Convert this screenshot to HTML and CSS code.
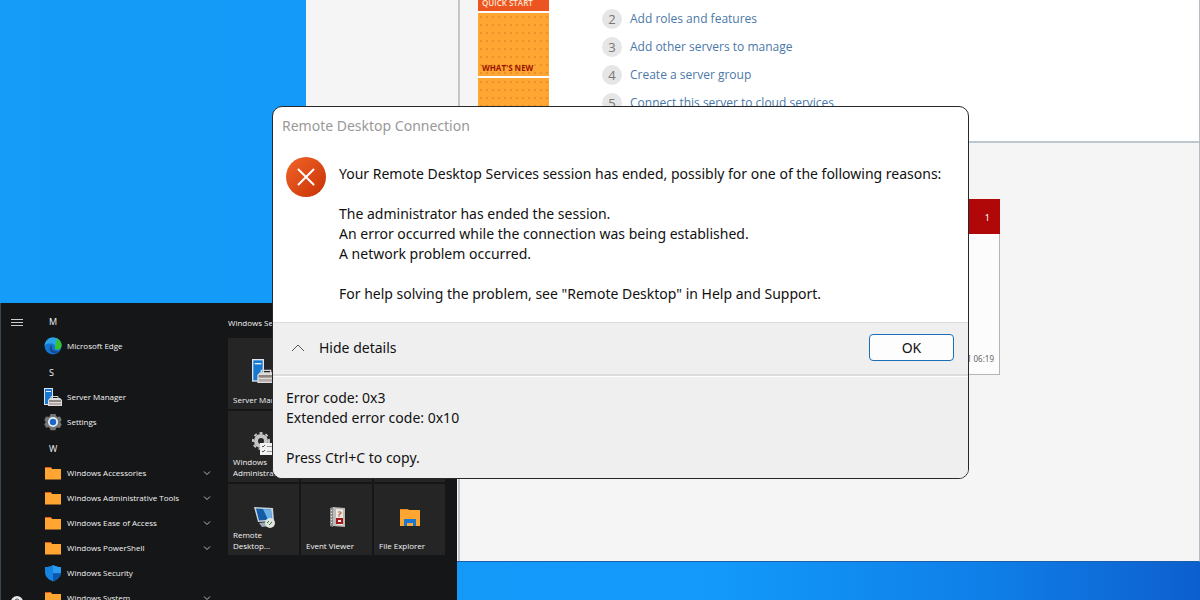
FILE: index.html
```html
<!doctype html>
<html lang="en">

<head>
  <meta charset="UTF-8" />
  <meta name="viewport" content="width=device-width, initial-scale=1.0" />
  <title>Remote Desktop Connection</title>
  <link rel="stylesheet" href="styles.css">
</head>

<body>
  <!-- shared icons -->
  <svg class="sprite" aria-hidden="true">
    <symbol id="folder" viewBox="0 0 16 14">
      <path d="M0 1h6l1 2v3H0z" fill="#e2571c" />
      <path d="M0 2h6l1 1h9v10.500H0z" fill="#ffa632" />
    </symbol>
    <symbol id="chevron" viewBox="0 0 8 8">
      <path d="M1 2.500l3 3 3-3" fill="none" stroke="#bbb" />
    </symbol>
    <symbol id="server" viewBox="0 0 18 18">
      <path d="M0 0h9v17H0z" fill="#d9e6f2" />
      <path d="M1 1h7v15H1z" fill="#1878d0" />
      <path d="M2 3.500h5" stroke="#e8f2fb" />
      <path d="M7 11V8.500h7V11" fill="none" stroke="#d5d5d5" />
      <path d="M4 12l2-2h10l2 2v6H4z" fill="#dcdcdc" />
      <path d="M5 12h12v2H5z" fill="#8f8580" />
      <path d="M5 15h12v2H5z" fill="#b5aaa5" />
    </symbol>
  </svg>

  <main class="desktop">
    <section class="server-window" aria-label="Server Manager">
      <aside class="sidebar"></aside>
      <div class="dashboard">
        <div class="welcome">
          <nav class="welcome-tabs">
            <a href="#" class="tab tab-start">QUICK START</a>
            <a href="#" class="tab">WHAT'S NEW</a>
            <a href="#" class="tab" aria-label="Learn more"></a>
          </nav>
          <ol class="steps">
            <li><span class="num">2</span><a href="#">Add roles and features</a></li>
            <li><span class="num">3</span><a href="#">Add other servers to manage</a></li>
            <li><span class="num">4</span><a href="#">Create a server group</a></li>
            <li><span class="num">5</span><a href="#">Connect this server to cloud services</a></li>
          </ol>
        </div>
        <article class="role-card">
          <header>1</header>
          <p>1 06:19</p>
        </article>
      </div>
    </section>

    <section class="start-menu" aria-label="Start">
      <div class="rail">
        <button class="menu-btn" aria-label="Expand">
          <svg width="12" height="8" viewBox="0 0 12 8"><path d="M0 .5h12M0 3.500h12M0 6.500h12" stroke="#ccc" /></svg>
        </button>
        <svg class="avatar" width="12" height="12" viewBox="0 0 12 12">
          <circle cx="6" cy="6" r="6" fill="#e8e8e8" />
          <circle cx="6" cy="5" r="2" fill="none" stroke="#555" />
        </svg>
      </div>

      <ul class="apps">
        <li class="letter">M</li>
        <li>
          <a href="#">
            <svg width="18" height="18" viewBox="0 0 18 18">
              <circle cx="9" cy="9" r="8.500" fill="#1673cf" />
              <path d="M.5 8.500C1.500 3 5 .5 9 .5c5 0 8.500 3.500 8.500 7.500 0 3-2 4.500-4.500 4.500-2 0-2.500-1-2-2 .5-2-1-4-4-4C4 6.500 1.500 7 .5 8.500z" fill="#2ba4ea" />
              <path d="M13 1.500c3 1.500 4.500 4 4.500 6.500 0 3-2 4.500-4.500 4.500-2 0-2.500-1-2-2 .5-2 1-5 2-9z" fill="#37c22b" />
              <path d="M8 8c-1 4 2 7 7 6-2 3-6 3-8 1-2-2-2-6 1-7z" fill="#124d93" />
            </svg>
            Microsoft Edge
          </a>
        </li>
        <li class="letter">S</li>
        <li><a href="#"><svg width="18" height="18"><use href="#server" /></svg>Server Manager</a></li>
        <li>
          <a href="#">
            <svg width="18" height="18" viewBox="0 0 18 18">
              <path d="M6.500 1h5l.8 2.300 1.200.7 2.500-.5 1.700 3.500-1.500 2 1.500 2.500-2 3.500-2.500-.5-1.200.7-.5 2h-5l-.8-2.200-1.200-.7-2.500.5-1.700-3.500L1.800 9 .3 7l1.700-3.500 2.500.5 1.200-.7z" fill="#767676" />
              <circle cx="9" cy="9" r="5" fill="#e6edf5" />
              <circle cx="9" cy="9" r="3.200" fill="#1b66c9" />
            </svg>
            Settings
          </a>
        </li>
        <li class="letter">W</li>
        <li><a href="#"><svg width="18" height="14"><use href="#folder" /></svg>Windows Accessories<svg class="chev" width="8" height="8"><use href="#chevron" /></svg></a></li>
        <li><a href="#"><svg width="18" height="14"><use href="#folder" /></svg>Windows Administrative Tools<svg class="chev" width="8" height="8"><use href="#chevron" /></svg></a></li>
        <li><a href="#"><svg width="18" height="14"><use href="#folder" /></svg>Windows Ease of Access<svg class="chev" width="8" height="8"><use href="#chevron" /></svg></a></li>
        <li><a href="#"><svg width="18" height="14"><use href="#folder" /></svg>Windows PowerShell<svg class="chev" width="8" height="8"><use href="#chevron" /></svg></a></li>
        <li>
          <a href="#">
            <svg width="18" height="18" viewBox="0 0 18 18">
              <path d="M9 1c2.500 1.500 5 2 8 2v5c0 5-4 8-8 9.500C5 16 1 13 1 8V3c3 0 5.500-.5 8-2z" fill="#1683e0" />
              <path d="M9 1c2.500 1.500 5 2 8 2v5c0 .5 0 .8-.1 1.200H9z" fill="#2a9bf0" />
              <path d="M9 9.200h7.900C16.300 13.500 12.500 16.200 9 17.500z" fill="#0c57ae" />
            </svg>
            Windows Security
          </a>
        </li>
        <li><a href="#"><svg width="18" height="14"><use href="#folder" /></svg>Windows System<svg class="chev" width="8" height="8"><use href="#chevron" /></svg></a></li>
      </ul>

      <div class="tiles-group">
        <h2>Windows Server</h2>
        <div class="tiles">
          <a href="#" class="tile">
            <svg width="24" height="24"><use href="#server" /></svg>
            <span>Server Manager</span>
          </a>
          <a href="#" class="tile"></a>
          <a href="#" class="tile"></a>
          <a href="#" class="tile">
            <svg width="24" height="24" viewBox="0 0 24 24">
              <circle cx="9" cy="9" r="5" fill="none" stroke="#c4c4c4" stroke-width="4" />
              <circle cx="9" cy="9" r="8" fill="none" stroke="#c4c4c4" stroke-width="2" stroke-dasharray="3 3" />
              <path d="M8 11h16v12H8z" fill="#f1f1f1" />
              <path d="M10 14l1 1 2-2M10 19l1 1 2-2" fill="none" stroke="#555" />
              <path d="M15 14.500h7M15 19.500h7" stroke="#999" />
            </svg>
            <span>Windows<br>Administrative...</span>
          </a>
          <a href="#" class="tile"></a>
          <a href="#" class="tile"></a>
          <a href="#" class="tile">
            <svg width="24" height="24" viewBox="0 0 24 24">
              <path d="M2 2l19 1 1 13-16 1z" fill="#c7d3de" />
              <path d="M4 3.500l15 1 1 10-13 1z" fill="#155ba8" />
              <path d="M11 4l8 .5 1 10-4 .3z" fill="#6cb0e6" />
              <path d="M7 18l9-1 2 4-8 1z" fill="#9fa9b3" />
              <circle cx="18" cy="18" r="5" fill="#dfe4dc" />
              <path d="M15 18l2-2M17 20l3-3" stroke="#3c6b45" fill="none" />
            </svg>
            <span>Remote<br>Desktop...</span>
          </a>
          <a href="#" class="tile">
            <svg width="24" height="24" viewBox="0 0 24 24">
              <path d="M5 3l3-1v20l-3-1z" fill="#8c8c8c" />
              <path d="M8 2l12 1v19l-12-1z" fill="#bdb9b6" />
              <path d="M11 4l7 .5v16l-7-1z" fill="#ece8e4" />
              <path d="M13 7h3v2h-2v3" fill="none" stroke="#b5613a" />
              <path d="M12 14h5v4h-5z" fill="none" stroke="#a31818" stroke-width="2" />
              <path d="M6.500 5v14" stroke="#eee" stroke-dasharray="1 2" />
            </svg>
            <span>Event Viewer</span>
          </a>
          <a href="#" class="tile">
            <svg width="24" height="24" viewBox="0 0 24 24">
              <path d="M2 4h8l2 2H2z" fill="#e88a1c" />
              <path d="M2 5h20v16H2z" fill="#ffa632" />
              <path d="M6 21v-7h12v7h-3v-3H9v3z" fill="#1c78cc" />
            </svg>
            <span>File Explorer</span>
          </a>
        </div>
      </div>
    </section>

    <section class="dialog" role="dialog" aria-labelledby="dialog-title">
      <h1 id="dialog-title">Remote Desktop Connection</h1>
      <div class="message">
        <svg width="40" height="40" viewBox="0 0 40 40">
          <defs>
            <linearGradient id="red" x1="0" y1="0" x2="1" y2="1">
              <stop offset="0" stop-color="#f2652a" />
              <stop offset="1" stop-color="#c73204" />
            </linearGradient>
          </defs>
          <circle cx="20" cy="20" r="20" fill="url(#red)" />
          <path d="M12.500 12.500l15 15M27.500 12.500l-15 15" stroke="#fff" stroke-width="2" stroke-linecap="round" />
        </svg>
        <div class="message-text">
          <p>Your Remote Desktop Services session has ended, possibly for one of the following reasons:</p>
          <p>The administrator has ended the session.<br>
            An error occurred while the connection was being established.<br>
            A network problem occurred.</p>
          <p>For help solving the problem, see "Remote Desktop" in Help and Support.</p>
        </div>
      </div>
      <div class="actions">
        <button class="toggle" aria-expanded="true" aria-controls="details">
          <svg width="14" height="8" viewBox="0 0 14 8"><path d="M1 7l6-6 6 6" fill="none" stroke="#555" /></svg>
          Hide details
        </button>
        <button class="ok">OK</button>
      </div>
      <div class="details" id="details">
        <p>Error code: 0x3<br>Extended error code: 0x10</p>
        <p>Press Ctrl+C to copy.</p>
      </div>
    </section>
  </main>
</body>

</html>
```
FILE: styles.css
```css
* {
  box-sizing: border-box;
}

body {
  margin: 0;
  font-family: "Noto Sans", "Open Sans", sans-serif;
  font-size: 14px;
  line-height: 20px;
  color: #111;
}

p,
h1,
h2,
ul,
ol {
  margin: 0;
  padding: 0;
  list-style: none;
}

a {
  text-decoration: none;
}

button {
  font: inherit;
  color: inherit;
  padding: 0;
  border: none;
  background: none;
}

.sprite {
  display: none;
}

.desktop {
  position: relative;
  height: 100vh;
  overflow: hidden;
  background: linear-gradient(90deg, #159cf8 0%, #1299fa 60%, #0f7fe8 82%, #0d5fce 100%);
}

/* server manager window */
.server-window {
  position: absolute;
  top: 0;
  bottom: 38px;
  left: 306px;
  right: 0;
  display: flex;
  background: #f5f5f5;
  border-right: 1px solid #b4bcc6;
  border-bottom: 1px solid #1a5fa8;
}

.sidebar {
  width: 154px;
  border-right: 2px solid #c3c6ca;
}

.dashboard {
  flex: 1;
}

.welcome {
  display: flex;
  height: 143px;
  margin-left: 18px;
  background: #fff;
  border-bottom: 2px solid #bcc7cf;
  overflow: hidden;
}

.welcome-tabs {
  display: flex;
  flex-direction: column;
  gap: 2px;
  width: 71px;
}

.tab {
  display: flex;
  align-items: flex-end;
  height: 63px;
  padding: 0 4px 2px;
  font-family: "Open Sans", sans-serif;
  font-size: 8px;
  font-weight: 700;
  line-height: 12px;
  white-space: nowrap;
  color: #9c1400;
  background: #ffa632 radial-gradient(circle, #e8932a 1px, transparent 1px) 0 0 / 6px 8px;
}

.tab-start {
  height: 11px;
  font-weight: 600;
  color: #ffe3cf;
  background: #ec5420;
}

.steps {
  padding: 5px 0 0 53px;
  font-family: "Open Sans", sans-serif;
}

.steps li {
  display: flex;
  align-items: center;
  gap: 8px;
  height: 28px;
}

.steps a {
  font-size: 12px;
  color: #4a78a8;
}

.num {
  width: 20px;
  height: 20px;
  border-radius: 50%;
  font-size: 13px;
  line-height: 20px;
  text-align: center;
  color: #777;
  background: #e6e6e6;
}

.role-card {
  display: flex;
  flex-direction: column;
  justify-content: space-between;
  width: 200px;
  height: 176px;
  margin: 56px 0 0 340px;
  background: #fcfcfc;
  border: solid #b5b5b5;
  border-width: 0 1px 1px 0;
  text-align: right;
}

.role-card header {
  height: 35px;
  margin-right: -1px;
  padding-right: 10px;
  font-size: 9px;
  line-height: 37px;
  color: #fff;
  background: #b00808;
}

.role-card p {
  padding: 0 5px 5px;
  font-size: 8px;
  color: #666;
}

/* start menu */
.start-menu {
  position: absolute;
  left: 0;
  bottom: 0;
  display: flex;
  width: 457px;
  height: 297px;
  overflow: hidden;
  font-family: "Open Sans", sans-serif;
  font-size: 8px;
  color: #f4f4f4;
  background: #151617;
  border-left: 1px solid #3c4650;
}

.start-menu a {
  color: inherit;
}

.rail {
  display: flex;
  flex-direction: column;
  align-items: center;
  justify-content: space-between;
  width: 32px;
  padding-top: 16px;
}

.menu-btn {
  display: flex;
}

.avatar {
  margin-bottom: -8px;
}

.apps {
  width: 180px;
  padding: 4px 2px 0 11px;
}

.apps li {
  height: 25px;
}

.apps .letter {
  height: 23px;
  margin-top: 3px;
  padding-left: 5px;
  font-size: 9px;
  line-height: 23px;
}

.apps a {
  display: flex;
  align-items: center;
  gap: 5px;
  height: 100%;
}

.chev {
  margin-left: auto;
}

.tiles-group {
  padding: 10px 0 0 15px;
}

.tiles-group h2 {
  font-size: 8px;
  font-weight: 400;
  line-height: 20px;
  margin-bottom: 5px;
}

.tiles {
  display: grid;
  grid-template-columns: repeat(3, 71px);
  grid-auto-rows: 71px;
  gap: 2px;
}

.tile {
  display: flex;
  flex-direction: column;
  align-items: center;
  justify-content: space-between;
  padding: 21px 5px 4px;
  line-height: 11px;
  white-space: nowrap;
  background: #252525;
  overflow: hidden;
}

.tile span {
  width: 100%;
}

/* error dialog */
.dialog {
  position: absolute;
  top: 106px;
  left: 272px;
  width: 697px;
  background: #fff;
  border: 1px solid #26282a;
  border-radius: 10px;
  overflow: hidden;
}

.dialog h1 {
  padding: 9px 9px 0;
  font-size: 14px;
  font-weight: 400;
  color: #999;
}

.message {
  display: flex;
  gap: 13px;
  padding: 21px 13px 18px;
}

.message-text {
  padding-top: 7px;
}

.message p + p,
.details p + p {
  margin-top: 20px;
}

.actions {
  display: flex;
  align-items: center;
  justify-content: space-between;
  height: 54px;
  padding: 0 14px 2px 18px;
  background: #efefef;
  border-top: 1px solid #dcdcdc;
  border-bottom: 2px solid #dcdcdc;
}

.toggle {
  display: flex;
  align-items: center;
  gap: 14px;
}

.ok {
  width: 85px;
  height: 27px;
  background: #fdfdfd;
  border: 1px solid #1a6fb8;
  border-radius: 4px;
}

.details {
  padding: 11px 13px 10px;
  background: #efefef;
  border-top: 1px solid #fff;
}
```
